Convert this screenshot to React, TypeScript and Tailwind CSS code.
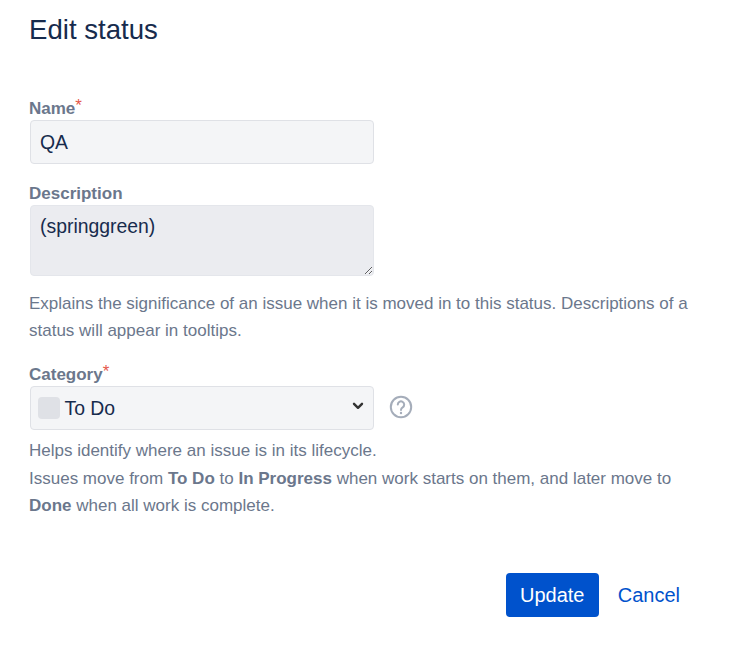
export default function App() {
  return (
    <div className="w-[740px] h-[649px] overflow-hidden bg-white pl-[30px] pr-[50px] font-['Liberation_Sans',Arial,sans-serif] text-[#172b4d]">
      <h1 className="pt-[13px] text-[27.6px] leading-[34px] font-normal -ml-px">Edit status</h1>

      <form className="mt-[51px]">
        <label className="block pt-px text-[17px] leading-[20px] font-bold text-[#6b778c] -ml-px h-[22px]">
          Name<span className="relative -top-[3px] text-[#e5584a] text-[17px] font-normal">*</span>
        </label>
        <input
          readOnly
          value="QA"
          className="block w-[344px] h-[44px] rounded-[4px] border-[1.5px] border-[#dfe1e6] bg-[#f4f5f7] px-[9px] text-[19.4px] text-[#172b4d] outline-none"
        />

        <label className="mt-[20px] block text-[17px] leading-[20px] font-bold text-[#6b778c] -ml-px h-[21px]">Description</label>
        <textarea
          readOnly
          value="(springgreen)"
          className="block w-[344px] h-[71px] rounded-[4px] border-[1.5px] border-[#e4e6eb] bg-[#ebecf0] px-[9px] pt-[8px] text-[19.4px] leading-[24px] text-[#172b4d] outline-none resize-y"
        />
        <p className="mt-[14px] text-[17px] leading-[27px] text-[#6b778c] -ml-px">
          Explains the significance of an issue when it is moved in to this status. Descriptions of a status will appear in tooltips.
        </p>

        <label className="mt-[21px] block text-[17px] leading-[20px] font-bold text-[#6b778c] -ml-px h-[21px]">
          Category<span className="relative -top-[3px] text-[#e5584a] text-[17px] font-normal">*</span>
        </label>
        <div className="flex items-center gap-[15px]">
          <div className="flex w-[344px] h-[44px] items-center rounded-[4px] border-[1.5px] border-[#dfe1e6] bg-[#f4f5f7] pl-[6.5px] pr-[9px]">
            <span className="h-[22px] w-[22px] rounded-[4px] bg-[#dfe1e6]" />
            <span className="ml-[5px] flex-1 pt-[2px] text-[19.4px]">To Do</span>
            <svg width="12" height="8" viewBox="0 0 12 8" fill="none" stroke="#333" strokeWidth="2.4" strokeLinecap="round" strokeLinejoin="round" className="-mt-[4px]">
              <path d="M2 1.8l4 4 4-4" />
            </svg>
          </div>
          <svg width="24" height="24" viewBox="0 0 24 24" fill="none" className="-mt-[3px]">
            <circle cx="12" cy="12" r="10.2" stroke="#a5adba" strokeWidth="2" />
            <path d="M8.8 9.6a3.2 3.2 0 1 1 4.9 2.7c-1.1.7-1.7 1.3-1.7 2.6" stroke="#a5adba" strokeWidth="2" strokeLinecap="round" />
            <circle cx="12" cy="18" r="1.2" fill="#a5adba" />
          </svg>
        </div>
        <div className="mt-[7px] text-[17px] leading-[27.5px] text-[#6b778c] -ml-px">
          <p>Helps identify where an issue is in its lifecycle.</p>
          <p>
            Issues move from <b>To Do</b> to <b>In Progress</b> when work starts on them, and later move to <b>Done</b> when all work is complete.
          </p>
        </div>

        <div className="mt-[53px] flex items-center justify-end gap-[19px] pr-[10px]">
          <button type="button" className="h-[44px] w-[93px] rounded-[4px] bg-[#0052cc] text-[20px] text-white">Update</button>
          <a className="text-[20px] text-[#0052cc]">Cancel</a>
        </div>
      </form>
    </div>
  );
}
